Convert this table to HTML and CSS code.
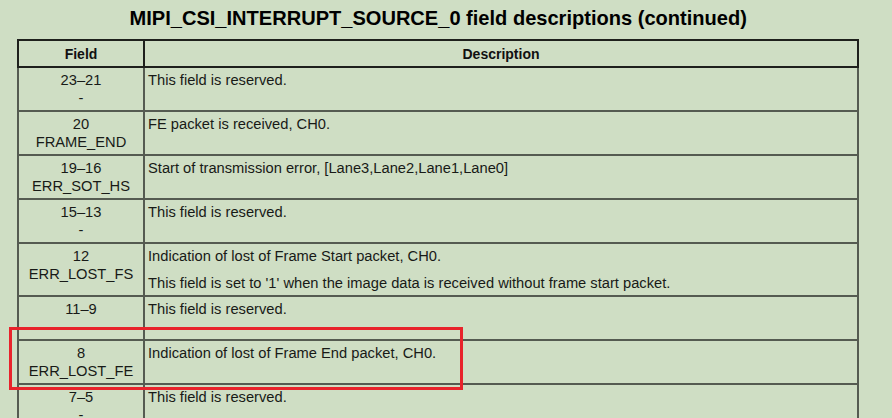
FILE: index.html
```html
<!DOCTYPE html>
<html>
<head>
<meta charset="utf-8">
<link rel="stylesheet" href="styles.css">
</head>
<body>
<div class="page">
  <h1 class="title"><span class="title-text">MIPI_CSI_INTERRUPT_SOURCE_0 field descriptions (continued)</span></h1>
  <table class="regs">
    <thead>
      <tr><th class="c-field">Field</th><th class="c-desc">Description</th></tr>
    </thead>
    <tbody>
      <tr><td class="c-field">23–21<br>-</td><td class="c-desc"><p>This field is reserved.</p></td></tr>
      <tr><td class="c-field">20<br>FRAME_END</td><td class="c-desc"><p>FE packet is received, CH0.</p></td></tr>
      <tr><td class="c-field">19–16<br>ERR_SOT_HS</td><td class="c-desc"><p>Start of transmission error, [Lane3,Lane2,Lane1,Lane0]</p></td></tr>
      <tr><td class="c-field">15–13<br>-</td><td class="c-desc"><p>This field is reserved.</p></td></tr>
      <tr><td class="c-field">12<br>ERR_LOST_FS</td><td class="c-desc"><p>Indication of lost of Frame Start packet, CH0.</p><p>This field is set to '1' when the image data is received without frame start packet.</p></td></tr>
      <tr><td class="c-field">11–9<br>-</td><td class="c-desc"><p>This field is reserved.</p></td></tr>
      <tr><td class="c-field">8<br>ERR_LOST_FE</td><td class="c-desc"><p>Indication of lost of Frame End packet, CH0.</p></td></tr>
      <tr><td class="c-field">7–5<br>-</td><td class="c-desc"><p>This field is reserved.</p></td></tr>
    </tbody>
  </table>
  <div class="highlight"></div>
</div>
</body>
</html>
```
FILE: styles.css
```css
html, body {
  margin: 0;
  padding: 0;
  background: #cfdec4;
  overflow: hidden;
}
.page {
  position: relative;
  width: 892px;
  height: 418px;
  padding-left: 17px;
  box-sizing: border-box;
  font-family: "Liberation Sans", Arial, sans-serif;
  color: #181a17;
}
.title {
  width: 842px;
  margin: 0;
  padding-top: 6px;
  height: 39px;
  box-sizing: border-box;
  text-align: center;
  font-family: "Liberation Sans", Arial, sans-serif;
  font-weight: bold;
  font-size: 21px;
  line-height: 24px;
  color: #000;
}
.title-text {
  display: inline-block;
  transform: scaleX(0.955);
  white-space: nowrap;
}
.regs {
  width: 842px;
  border-collapse: collapse;
  font-size: 14.7px;
  line-height: 18px;
}
.regs th {
  font-weight: bold;
  font-size: 14px;
  text-align: center;
  height: 25px;
  padding: 0;
  border: 2px solid #1e201c;
  color: #111;
}
.regs .c-field {
  width: 116px;
}
.regs td {
  border: 2px solid #555b51;
  padding: 3px 4px;
  vertical-align: top;
}
.regs td.c-field {
  text-align: center;
}
.regs td.c-desc {
  text-align: left;
  padding-left: 3px;
}
.regs p {
  margin: 0;
}
.regs p + p {
  margin-top: 9px;
}
.highlight {
  position: absolute;
  left: 9px;
  top: 327px;
  width: 454px;
  height: 63px;
  box-sizing: border-box;
  border: 3px solid #e8232b;
}
```
